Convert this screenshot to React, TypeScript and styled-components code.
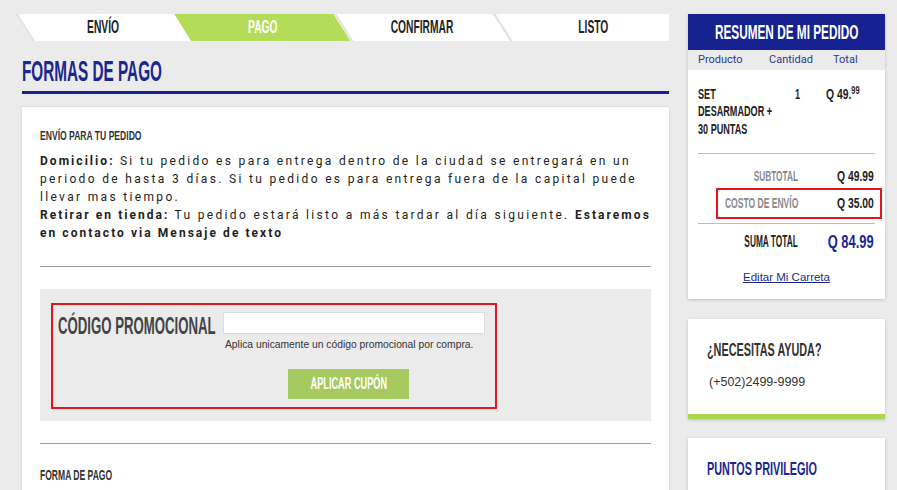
import React from 'react';
import styled, { createGlobalStyle } from 'styled-components';

const NAVY = '#16228f';
const PAGE_BG = '#ebebeb';
const TAB_GREEN = '#b3dc58';
const BTN_GREEN = '#a6c960';
const RED = '#e8141b';
const COND = `"Liberation Sans", Arial, sans-serif`;

const GlobalStyle = createGlobalStyle`
  html, body {
    margin: 0;
    padding: 0;
    background: ${PAGE_BG};
    font-family: Roboto, "Liberation Sans", sans-serif;
    color: #222;
  }
`;

// condensed display text: squeezed sideways because no narrow face is installed
const Squeeze = styled.span<{ $scale: number; $origin?: string }>`
  display: inline-block;
  white-space: nowrap;
  font-family: ${COND};
  font-weight: 700;
  transform: scaleX(${(p) => p.$scale});
  transform-origin: ${(p) => p.$origin || 'left'} center;
`;

const TabText = styled(Squeeze)`
  position: relative;
`;

const Page = styled.div`
  display: flex;
  align-items: flex-start;
  gap: 19px;
  padding: 14px 0 0 22px;
  height: 490px;
  box-sizing: border-box;
  overflow: hidden;
`;

const Main = styled.div`
  width: 647px;
  flex: 0 0 647px;
`;

const TabBar = styled.div`
  display: flex;
  height: 27px;
  width: 654px;
  margin-left: -7px;
  clip-path: polygon(0 0, 100% 0, 100% 100%, 17px 100%);
`;

const Tab = styled.div<{ $active?: boolean; $last?: boolean }>`
  position: relative;
  flex: 0 0 176.25px;
  box-sizing: border-box;
  min-width: 0;
  display: flex;
  align-items: center;
  justify-content: center;
  margin-right: ${(p) => (p.$last ? '0' : '-17px')};
  padding-left: ${(p) => (p.$last ? '24px' : '0')};
  background: ${(p) => (p.$active ? TAB_GREEN : '#fff')};
  color: ${(p) => (p.$active ? '#fff' : '#222')};
  font-size: 18px;
  clip-path: ${(p) =>
    p.$last
      ? 'polygon(0 0, 100% 0, 100% 100%, 17px 100%)'
      : 'polygon(0 0, calc(100% - 17px) 0, 100% 100%, 17px 100%)'};

  &::before {
    content: '';
    position: absolute;
    inset: 0;
    background: ${(p) => (p.$active ? 'transparent' : '#e3e3e3')};
    clip-path: polygon(0 0, 3px 0, 20px 100%, 17px 100%);
  }
`;

const TitleBar = styled.div`
  margin-top: 15px;
  padding-bottom: 5px;
  border-bottom: 3px solid ${NAVY};
  height: 30px;
  line-height: 30px;
  font-size: 30px;
  color: #1a2790;
`;

const Card = styled.div`
  margin-top: 13px;
  background: #fff;
  box-shadow: 0 0 2px rgba(0, 0, 0, 0.18);
  padding: 21px 18px 40px;
`;

const Label = styled.div<{ $top?: number; $size?: number }>`
  margin-top: ${(p) => p.$top || 0}px;
  font-size: ${(p) => p.$size || 13}px;
  line-height: 15px;
  height: 15px;
  color: #333;
`;

const Text = styled.p`
  margin: 9px 0 0;
  font-size: 12px;
  line-height: 18px;
  letter-spacing: 2.33px;
  white-space: nowrap;
  color: #222;

  b {
    font-weight: 700;
    letter-spacing: 2.05px;
  }
`;

const Rule = styled.hr<{ $top: number }>`
  margin: ${(p) => p.$top}px 0 0;
  border: 0;
  border-top: 1px solid #9c9c9c;
  height: 0;
`;

const PromoBox = styled.div`
  margin-top: 22px;
  background: ${PAGE_BG};
  padding: 14px 11px 12px;
`;

const PromoFrame = styled.div`
  width: 446px;
  box-sizing: border-box;
  border: 2px solid ${RED};
  padding: 7px 0 8px 5px;
  display: flex;
`;

const PromoTitle = styled.div`
  flex: 0 0 165px;
  min-width: 0;
  padding-top: 1px;
  font-size: 24px;
  line-height: 26px;
  color: #444;
`;

const PromoFields = styled.div`
  display: flex;
  flex-direction: column;
  width: 262px;
`;

const CodeInput = styled.input`
  height: 22px;
  box-sizing: border-box;
  width: 262px;
  border: 1px solid #dcdcdc;
  background: #fff;
  outline: none;
`;

const Hint = styled.div`
  margin-top: 5px;
  font-family: "Liberation Sans", Arial, sans-serif;
  font-size: 10.3px;
  line-height: 12px;
  color: #333;
  padding-left: 2px;
  white-space: nowrap;
`;

const ApplyButton = styled.button`
  margin: 18px 0 0 65px;
  width: 121px;
  height: 30px;
  border: 0;
  background: ${BTN_GREEN};
  color: #fff;
  font-size: 17px;
  padding: 0;
  display: flex;
  align-items: center;
  justify-content: center;
`;

const Side = styled.div`
  width: 197px;
  flex: 0 0 197px;
`;

const Box = styled.div<{ $accent?: boolean; $top?: number; $height?: number }>`
  margin-top: ${(p) => p.$top || 0}px;
  height: ${(p) => (p.$height ? `${p.$height}px` : 'auto')};
  background: #fff;
  box-shadow: 0 1px 3px rgba(0, 0, 0, 0.2);
  border-bottom: ${(p) => (p.$accent ? '5px solid #acd650' : '0')};
`;

const SummaryHead = styled.div`
  height: 36px;
  background: ${NAVY};
  color: #fff;
  font-size: 20px;
  display: flex;
  align-items: center;
  justify-content: center;
`;

const ColumnRow = styled.div`
  display: grid;
  grid-template-columns: 71px 64px 1fr;
  height: 20px;
  line-height: 20px;
  padding-left: 10px;
  background: ${PAGE_BG};
  font-size: 11px;
  color: #2c3a8f;
`;

const SummaryBody = styled.div`
  padding: 16px 0 15px;
`;

const ItemRow = styled.div`
  display: grid;
  grid-template-columns: 97px 31px 1fr;
  padding-left: 10px;
  font-size: 14px;
  line-height: 17.3px;
  color: #222;

  & > * {
    min-width: 0;
  }
`;

const Sup = styled.sup`
  font-size: 10px;
  vertical-align: 5px;
  line-height: 0;
`;

const ThinRule = styled.hr<{ $top: number }>`
  margin: ${(p) => p.$top}px 10px 0;
  border: 0;
  border-top: 1px solid #bdbdbd;
  height: 0;
`;

const TotalRow = styled.div<{ $flag?: boolean; $big?: boolean; $top?: number }>`
  display: grid;
  grid-template-columns: minmax(0, 1fr) 76px;
  margin: ${(p) => (p.$flag ? `${p.$top || 0}px 3px 0 28px` : `${p.$top || 0}px 11px 0 10px`)};
  padding: ${(p) => (p.$flag ? '3px 6px 4px 0' : '0')};
  border: ${(p) => (p.$flag ? `2px solid ${RED}` : '0')};
  height: ${(p) => (p.$big ? 24 : 20)}px;
`;

const TotalCell = styled.div<{ $tone: string; $size: number }>`
  display: flex;
  align-items: center;
  justify-content: flex-end;
  min-width: 0;
  font-size: ${(p) => p.$size}px;
  color: ${(p) => p.$tone};
`;

const EditLink = styled.a`
  display: block;
  margin-top: 16px;
  text-align: center;
  font-family: "Liberation Sans", Arial, sans-serif;
  font-size: 11.5px;
  line-height: 14px;
  color: #1e2a8a;
  text-decoration: underline;
`;

const BoxTitle = styled.div<{ $tone: string }>`
  padding: 20px 0 0 19px;
  font-size: 19px;
  line-height: 22px;
  color: ${(p) => p.$tone};
`;

const Phone = styled.div`
  margin: 13px 0 0 21px;
  padding-bottom: 24px;
  font-family: "Liberation Sans", Arial, sans-serif;
  font-size: 12.5px;
  line-height: 16px;
  color: #333;
`;

const tabs = ['ENVÍO', 'PAGO', 'CONFIRMAR', 'LISTO'];

export default function App() {
  return (
    <>
      <GlobalStyle />
      <Page>
        <Main>
          <TabBar>
            {tabs.map((t, i) => (
              <Tab key={t} $active={t === 'PAGO'} $last={i === tabs.length - 1}>
                <TabText $scale={0.57} $origin="center">
                  {t}
                </TabText>
              </Tab>
            ))}
          </TabBar>

          <TitleBar>
            <Squeeze $scale={0.51}>FORMAS DE PAGO</Squeeze>
          </TitleBar>

          <Card>
            <Label>
              <Squeeze $scale={0.66}>ENVÍO PARA TU PEDIDO</Squeeze>
            </Label>
            <Text>
              <b>Domicilio:</b> Si tu pedido es para entrega dentro de la ciudad se entregará en un
              <br />
              periodo de hasta 3 días. Si tu pedido es para entrega fuera de la capital puede
              <br />
              llevar mas tiempo.
              <br />
              <b>Retirar en tienda:</b> Tu pedido estará listo a más tardar al día siguiente. <b>Estaremos</b>
              <br />
              <b>en contacto via Mensaje de texto</b>
            </Text>

            <Rule $top={24} />

            <PromoBox>
              <PromoFrame>
                <PromoTitle>
                  <Squeeze $scale={0.55}>CÓDIGO PROMOCIONAL</Squeeze>
                </PromoTitle>
                <PromoFields>
                  <CodeInput type="text" />
                  <Hint>Aplica unicamente un código promocional por compra.</Hint>
                  <ApplyButton>
                    <Squeeze $scale={0.54} $origin="center">APLICAR CUPÓN</Squeeze>
                  </ApplyButton>
                </PromoFields>
              </PromoFrame>
            </PromoBox>

            <Rule $top={22} />

            <Label $top={24} $size={14}>
              <Squeeze $scale={0.61}>FORMA DE PAGO</Squeeze>
            </Label>
          </Card>
        </Main>

        <Side>
          <Box>
            <SummaryHead>
              <Squeeze $scale={0.59} $origin="center">RESUMEN DE MI PEDIDO</Squeeze>
            </SummaryHead>
            <ColumnRow>
              <span>Producto</span>
              <span>Cantidad</span>
              <span>Total</span>
            </ColumnRow>
            <SummaryBody>
              <ItemRow>
                <Squeeze $scale={0.65}>
                  SET
                  <br />
                  DESARMADOR +
                  <br />
                  30 PUNTAS
                </Squeeze>
                <Squeeze $scale={0.65}>1</Squeeze>
                <Squeeze $scale={0.74}>
                  Q 49.<Sup>99</Sup>
                </Squeeze>
              </ItemRow>

              <ThinRule $top={15} />

              <TotalRow $top={12}>
                <TotalCell $tone="#8a8a8a" $size={14}>
                  <Squeeze $scale={0.59} $origin="right">SUBTOTAL</Squeeze>
                </TotalCell>
                <TotalCell $tone="#222" $size={14}>
                  <Squeeze $scale={0.74} $origin="right">Q 49.99</Squeeze>
                </TotalCell>
              </TotalRow>

              <TotalRow $flag $top={2}>
                <TotalCell $tone="#8a8a8a" $size={14}>
                  <Squeeze $scale={0.61} $origin="right">COSTO DE ENVÍO</Squeeze>
                </TotalCell>
                <TotalCell $tone="#222" $size={14}>
                  <Squeeze $scale={0.74} $origin="right">Q 35.00</Squeeze>
                </TotalCell>
              </TotalRow>

              <ThinRule $top={4} />

              <TotalRow $big $top={6}>
                <TotalCell $tone="#222" $size={16}>
                  <Squeeze $scale={0.52} $origin="right">SUMA TOTAL</Squeeze>
                </TotalCell>
                <TotalCell $tone="#1a2790" $size={19}>
                  <Squeeze $scale={0.68} $origin="right">Q 84.99</Squeeze>
                </TotalCell>
              </TotalRow>

              <EditLink href="#">Editar Mi Carreta</EditLink>
            </SummaryBody>
          </Box>

          <Box $accent $top={20}>
            <BoxTitle $tone="#333">
              <Squeeze $scale={0.57}>¿NECESITAS AYUDA?</Squeeze>
            </BoxTitle>
            <Phone>(+502)2499-9999</Phone>
          </Box>

          <Box $top={19} $height={80}>
            <BoxTitle $tone="#1a2790">
              <Squeeze $scale={0.57}>PUNTOS PRIVILEGIO</Squeeze>
            </BoxTitle>
          </Box>
        </Side>
      </Page>
    </>
  );
}
